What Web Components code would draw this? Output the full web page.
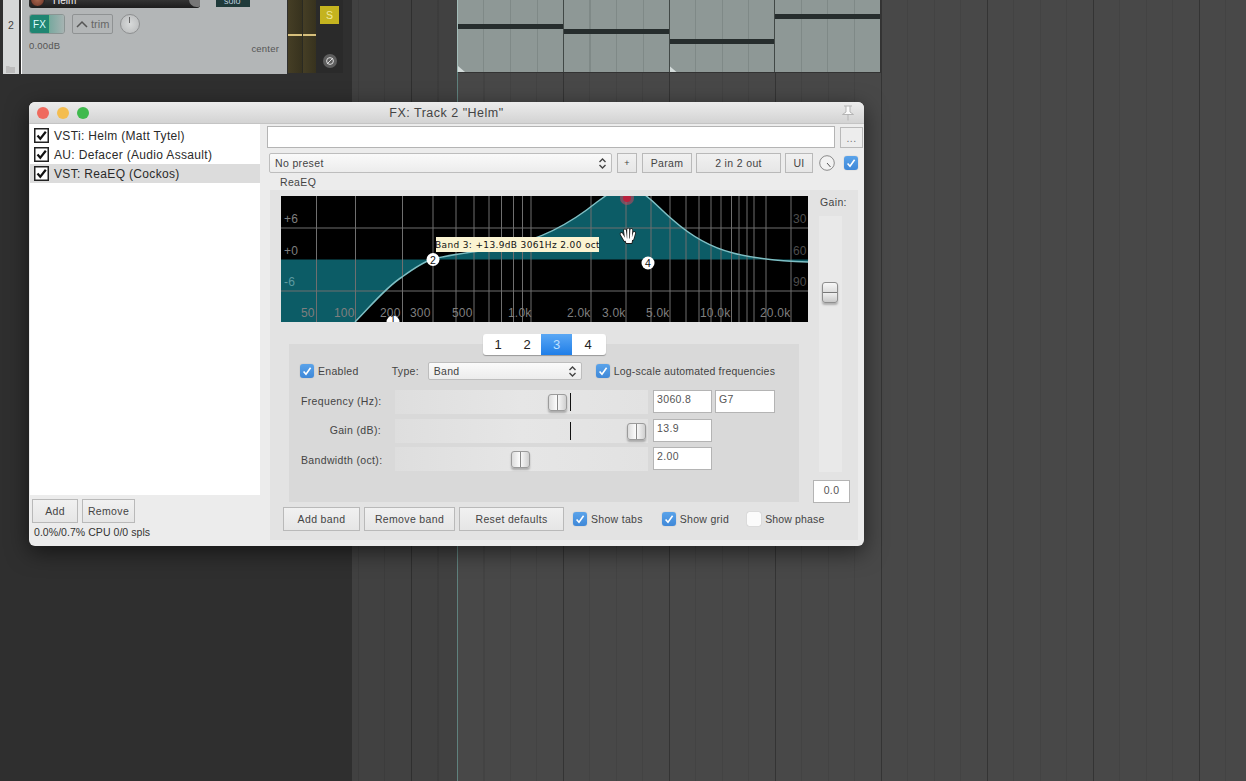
<!DOCTYPE html>
<html>
<head>
<meta charset="utf-8">
<title>FX: Track 2 "Helm"</title>
<style>
html, body { margin: 0; padding: 0; background: #333; }
body { width: 1246px; height: 781px; overflow: hidden; font-family: "Liberation Sans", Arial, sans-serif; }
</style>
</head>
<body>
<daw-desktop>
  <track-panel slot="tcp"></track-panel>
  <fx-window slot="window">
    <fx-list slot="list">
      <fx-row>VSTi: Helm (Matt Tytel)</fx-row>
      <fx-row>AU: Defacer (Audio Assault)</fx-row>
      <fx-row selected>VST: ReaEQ (Cockos)</fx-row>
    </fx-list>
    <rea-eq slot="plugin"></rea-eq>
  </fx-window>
</daw-desktop>

<script>
const shared = `
  * { box-sizing: border-box; }
`;

class Btn extends HTMLElement {
    constructor(){
        super();
        this.attachShadow({mode: 'open'});
    }
    connectedCallback(){
        this.shadowRoot.innerHTML = `
        <style>
        :host {
            display: inline-flex; align-items: center; justify-content: center;
            box-sizing: border-box; height: 24px;
            font: 10.5px "Liberation Sans", Arial, sans-serif; letter-spacing: .35px; color: #444;
            background: linear-gradient(#f1f1f1, #e6e6e6);
            border: 1px solid #b9b9b9; flex: none;
        }
        </style><slot></slot>`;
    }
}

class Check extends HTMLElement {
    constructor(){
        super();
        this.attachShadow({mode: 'open'});
    }
    connectedCallback(){
        const on = this.hasAttribute('on');
        this.shadowRoot.innerHTML = `
        <style>
        :host {
            display: inline-flex; align-items: center; gap: 4px; flex: none;
            font: 10.5px "Liberation Sans", Arial, sans-serif; letter-spacing: .3px; color: #444;
        }
        .box {
            width: 14px; height: 14px; border-radius: ${on ? 3 : 2}px; flex: none;
            background: ${on ? 'linear-gradient(#5aa3ea,#3f88d8)' : '#fbfbfb'};
            box-shadow: 0 0 1px #999; display: block;
        }
        </style>
        <svg class="box" viewBox="0 0 14 14">${on ? '<path d="M3.6 7.4 6 10.2 10.6 3.8" fill="none" stroke="#fff" stroke-width="1.6"/>' : ''}</svg>
        <slot></slot>`;
    }
}

class Combo extends HTMLElement {
    constructor(){
        super();
        this.attachShadow({mode: 'open'});
    }
    connectedCallback(){
        this.shadowRoot.innerHTML = `
        <style>
        :host {
            display: flex; align-items: center; justify-content: space-between; flex: none;
            box-sizing: border-box; padding: 0 4px 0 5px;
            font: 10.5px "Liberation Sans", Arial, sans-serif; letter-spacing: .35px; color: #444;
            background: linear-gradient(#fafafa, #ececec);
            border: 1px solid #bdbdbd; border-radius: 2px;
        }
        svg { display: block; flex: none; }
        </style>
        <slot></slot>
        <svg width="9" height="13" viewBox="0 0 9 13"><path d="M1.5 5 4.5 2 7.5 5M1.5 8 4.5 11 7.5 8" fill="none" stroke="#444" stroke-width="1.4"/></svg>`;
    }
}

class Field extends HTMLElement {
    constructor(){
        super();
        this.attachShadow({mode: 'open'});
    }
    connectedCallback(){
        this.shadowRoot.innerHTML = `
        <style>
        :host {
            display: flex; align-items: flex-start; flex: none;
            box-sizing: border-box; padding: 2px 0 0 3px;
            font: 10.5px "Liberation Sans", Arial, sans-serif; letter-spacing: .35px; color: #555;
            background: #fff; border: 1px solid #b4b4b4;
        }
        </style><slot></slot>`;
    }
}

class Slider extends HTMLElement {
    constructor(){
        super();
        this.attachShadow({mode: 'open'});
    }
    connectedCallback(){
        const pos = this.getAttribute('pos');
        const mark = this.getAttribute('mark');
        this.shadowRoot.innerHTML = `
        <style>
        :host {
            display: block; position: relative; height: 24px; width: 253px; flex: none;
            background: linear-gradient(90deg, #dedede, #e6e6e6 50%, #e2e2e2);
        }
        .thumb {
            position: absolute; top: 4px; left: ${pos}px; width: 19px; height: 17px; box-sizing: border-box;
            border: 1px solid #9b9b9b; border-radius: 3px;
            background: linear-gradient(90deg, #dcdcdc, #fbfbfb 45%, #888 48%, #888 52%, #f5f5f5 55%, #cfcfcf);
            box-shadow: 0 2px 2px rgba(0,0,0,.25);
        }
        .mark { position: absolute; top: 3px; left: ${mark}px; width: 1px; height: 18px; background: #111; }
        </style>
        ${mark ? '<div class="mark"></div>' : ''}
        <div class="thumb"></div>`;
    }
}

class TrackPanel extends HTMLElement {
    constructor(){
        super();
        this.attachShadow({mode: 'open'});
    }
    connectedCallback(){
        this.shadowRoot.innerHTML = `
        <style>
        :host { display: flex; height: 74px; width: 352px; background: #2f2f2f; padding-left: 3px; box-sizing: border-box; font: 10px "Liberation Sans", Arial, sans-serif; color: #444; }
        ${shared}
        .num { width: 16px; background: #d6d8d8; display: flex; flex-direction: column; align-items: center; color: #444; font-size: 10.5px; padding-top: 19px; position: relative; }
        .num svg { position: absolute; bottom: 1px; left: 3px; }
        .sep { width: 3px; background: #2f2f2f; border-right: 1px solid #fff; }
        .body { width: 265px; background: #b3b6b7; position: relative; display: grid; grid-template-rows: 8px 20px 1fr; row-gap: 6px; padding: 0 7px; }
        .top { display: flex; align-items: flex-start; height: 8px; gap: 0; }
        .black { width: 171px; height: 8px; background: linear-gradient(#333,#1c1c1c); border-radius: 0 0 3px 3px; color: #eee; font-size: 10px; position: relative; overflow: hidden; padding-left: 24px; line-height: 2px; }
        .rec { position: absolute; left: 1px; top: -8px; width: 15px; height: 15px; border-radius: 50%; background: radial-gradient(#a6664e, #6b3225); border: 1px solid #222; }
        .vol { position: absolute; left: 160px; top: -8px; width: 15px; height: 15px; border-radius: 50%; background: #777; }
        .meter { margin-left: 16px; width: 34px; height: 7px; background: #1f3a3a; color: #bcd; font-size: 9px; line-height: 2px; overflow: hidden; padding-left: 8px; }
        .ctl { display: flex; align-items: center; gap: 7px; }
        .fx { width: 36px; height: 20px; border-radius: 3px; border: 1px solid #8a9493; display: flex; overflow: hidden; font-size: 10px; color: #dff; }
        .fx b { font-weight: normal; width: 19px; background: #1f8672; display: flex; align-items: center; justify-content: center; }
        .fx i { flex: 1; background: linear-gradient(90deg,#7aa9a0,#a6b3b2); border-left: 1px solid #6b8; }
        .trim { width: 41px; height: 20px; border: 1px solid #8f9293; border-radius: 2px; display: flex; align-items: center; gap: 2px; padding-left: 3px; font-size: 11px; color: #666; }
        .knob { width: 20px; height: 20px; border-radius: 50%; background: radial-gradient(#d8dada, #b6b8b9); border: 1px solid #8e9091; position: relative; }
        .knob::after { content: ""; position: absolute; left: 8px; top: 2px; width: 1px; height: 6px; background: #666; }
        .low { display: flex; justify-content: space-between; padding-right: 1px; font-size: 9.5px; color: #555; letter-spacing: .2px; }
        .low span:last-child { padding-top: 3px; }
        .fader { width: 28px; margin-left: 1px; display: grid; grid-template-columns: 1fr 1fr; gap: 1px; background: #2a2a22; height: 73px; }
        .fader div { background: linear-gradient(90deg, #453e25, #37321e); position: relative; }
        .fader div::after { content: ""; position: absolute; left: 0; right: 0; top: 34px; height: 2px; background: #d6bf7c; }
        .strip { width: 27px; height: 73px; background: #2a2a2a; display: flex; flex-direction: column; align-items: center; padding-top: 6px; justify-content: space-between; padding-bottom: 5px; }
        .solo { width: 19px; height: 18px; background: #c4b31f; color: #efe9a0; font-size: 10.5px; display: flex; align-items: center; justify-content: center; }
        .phase { width: 14px; height: 14px; border-radius: 50%; background: #5e5e5e; display: block; }
        </style>
        <div class="num">2
          <svg width="9" height="7" viewBox="0 0 9 7"><path d="M0 0h3l1 1h5v6H0z" fill="#bcbcbc"/></svg>
        </div>
        <div class="sep"></div>
        <div class="body">
          <div class="top">
            <div class="black">Helm<span class="rec"></span><span class="vol"></span></div>
            <div class="meter">solo</div>
          </div>
          <div class="ctl">
            <div class="fx"><b>FX</b><i></i></div>
            <div class="trim"><svg width="13" height="8" viewBox="0 0 13 8"><path d="M1 7 6 2l5 5" fill="none" stroke="#555" stroke-width="1.5"/></svg>trim</div>
            <div class="knob"></div>
          </div>
          <div class="low"><span>0.00dB</span><span>center</span></div>
        </div>
        <div class="fader"><div></div><div></div></div>
        <div class="strip">
          <div class="solo">S</div>
          <svg class="phase" viewBox="0 0 14 14"><circle cx="7" cy="7" r="3.4" fill="none" stroke="#ddd"/><path d="M4 10 10 4" stroke="#ddd"/></svg>
        </div>`;
    }
}

class DawDesktop extends HTMLElement {
    constructor(){
        super();
        this.attachShadow({mode: 'open'});
    }
    connectedCallback(){
        const notes = [[24,1],[29,0],[39,1],[14,0]];
        const items = notes.map(n => `<div class="item ${n[1] ? 'fade' : ''}"><span style="margin-top:${n[0]}px"></span></div>`).join('');
        this.shadowRoot.innerHTML = `
        <style>
        :host { display: block; position: relative; width: 1246px; height: 781px; overflow: hidden; background: #2f2f2f; }
        .layout { display: grid; grid-template-columns: 352px 1fr; height: 100%; }
        .left { background: #2f2f2f; }
        .arrange {
            position: relative; background-color: #484848;
            background-image:
              linear-gradient(90deg, rgba(0,0,0,.1) 105px, transparent 105px),
              repeating-linear-gradient(90deg, #343434 0 1px, transparent 1px 106px),
              repeating-linear-gradient(90deg, #434343 0 1px, transparent 1px 26.5px);
            background-position: 0 0, 105px 0, 105px 0;
        }
        .lane { display: flex; margin-left: 105px; width: 424px; height: 72px; border-bottom: 1px solid #333; box-sizing: content-box; }
        .item {
            flex: 1; height: 72px; background-color: #8e9896; box-sizing: border-box; position: relative;
            border-left: 1px solid #414846;
            background-image: repeating-linear-gradient(90deg, transparent 0 25.5px, #7f8987 25.5px 26.5px);
        }
        .item:first-child { border-left: 1px solid #a3bcb9; }
        .item:last-child { border-right: 1px solid #333; }
        .item span { display: block; height: 5px; background: #262d2d; position: relative; }
        .item.fade::after { content: ""; position: absolute; left: 0; bottom: 0; width: 7px; height: 6px; background: #d4dcdb; clip-path: polygon(0 0, 100% 100%, 0 100%); }
        .cursor { position: absolute; left: 105px; top: 72px; bottom: 0; width: 1px; background: #5f827e; }
        .win { position: absolute; left: 29px; top: 102px; }
        </style>
        <div class="layout">
          <div class="left"><slot name="tcp"></slot></div>
          <div class="arrange"><div class="lane">${items}</div><div class="cursor"></div></div>
        </div>
        <div class="win"><slot name="window"></slot></div>`;
    }
}

class FxWindow extends HTMLElement {
    constructor(){
        super();
        this.attachShadow({mode: 'open'});
    }
    connectedCallback(){
        this.shadowRoot.innerHTML = `
        <style>
        :host {
            display: flex; flex-direction: column; width: 835px; height: 444px;
            background: #ececec; border-radius: 6px; overflow: hidden;
            font: 10.5px "Liberation Sans", Arial, sans-serif; color: #333;
            box-shadow: 0 6px 22px rgba(0,0,0,.55);
        }
        ${shared}
        .title {
            height: 22px; flex: none; display: flex; align-items: center; position: relative;
            background: linear-gradient(#ececec, #d3d3d3); justify-content: center;
            font-size: 12.5px; letter-spacing: .5px; color: #444; border-bottom: 1px solid #c4c4c4;
        }
        .lights { position: absolute; left: 8px; top: 5px; display: flex; gap: 8px; }
        .lights i { width: 12px; height: 12px; border-radius: 50%; display: block; }
        .pin { position: absolute; right: 9px; top: 3px; }
        .main { flex: 1; display: grid; grid-template-columns: 231px 1fr; min-height: 0; }
        .side { display: flex; flex-direction: column; padding-left: 1px; }
        .btns { display: flex; gap: 4px; padding: 4px 0 0 2px; }
        .btns fx-btn { width: 46px; }
        .btns fx-btn + fx-btn { width: 53px; }
        .cpu { padding: 3px 0 0 4px; font-size: 10.5px; letter-spacing: .05px; color: #333; }
        </style>
        <div class="title">
          <div class="lights"><i style="background:#ef6a5e"></i><i style="background:#f4bd4f"></i><i style="background:#3fb94d"></i></div>
          FX: Track 2 "Helm"
          <svg class="pin" width="14" height="16" viewBox="0 0 14 16"><path d="M3 1h8M5 1v6L1.500 9.500h11L9 7V1M7 9.500V15.500" fill="#fafafa" stroke="#b5b5b5"/></svg>
        </div>
        <div class="main">
          <div class="side">
            <slot name="list"></slot>
            <div class="btns"><fx-btn>Add</fx-btn><fx-btn>Remove</fx-btn></div>
            <div class="cpu">0.0%/0.7% CPU 0/0 spls</div>
          </div>
          <slot name="plugin"></slot>
        </div>`;
    }
}

class FxList extends HTMLElement {
    constructor(){
        super();
        this.attachShadow({mode: 'open'});
    }
    connectedCallback(){
        this.shadowRoot.innerHTML = `
        <style>
        :host { display: flex; flex-direction: column; height: 371px; width: 230px; background: #fff; padding-top: 2px; box-sizing: border-box; flex: none; }
        </style><slot></slot>`;
    }
}

class FxRow extends HTMLElement {
    constructor(){
        super();
        this.attachShadow({mode: 'open'});
    }
    connectedCallback(){
        this.shadowRoot.innerHTML = `
        <style>
        :host {
            display: flex; align-items: center; gap: 5px; height: 19px; padding-left: 4px;
            font: 12px "Liberation Sans", Arial, sans-serif; letter-spacing: .33px; color: #2a2a2a;
            background: ${this.hasAttribute('selected') ? '#dcdcdc' : '#fff'};
        }
        svg { display: block; flex: none; }
        </style>
        <svg width="15" height="15" viewBox="0 0 15 15"><rect x=".75" y=".75" width="13.500" height="13.500" fill="#fff" stroke="#222" stroke-width="1.500"/><path d="M3.500 7.500 6.300 10.800 11.800 3.800" fill="none" stroke="#111" stroke-width="2.200"/></svg>
        <slot></slot>`;
    }
}

class EqGraph extends HTMLElement {
    constructor(){
        super();
        this.attachShadow({mode: 'open'});
    }
    connectedCallback(){
        // x positions of the grid, in window coordinates of the reference
        const xs = [316.5,355.5,402.5,433,456,474,489,501.5,513.5,522.5,531,591,626,651,670,686,699,711,721,731.5,739,747,754,766,791];
        const ox = 281;
        const grid = xs.map(x => `<line x1="${x-ox}" x2="${x-ox}" y1="0" y2="126"/>`).join('');
        const freq = [[50,301],[100,334],[200,380],[300,410],[500,452],['1.0k',508],['2.0k',567],['3.0k',602],['5.0k',646],['10.0k',700],['20.0k',760]];
        const fl = freq.map(f => `<text x="${f[1]-ox}" y="121">${f[0]}</text>`).join('');
        const curve = 'M74 126C90 110 104 92 121 81 132 73 142 66 152 63 176 57 200 56 226 50 262 43 290 27 316 6L330 -4 360 -4C372 4 380 14 392 24 410 40 432 52 452 57 474 63 500 65 527 66';
        this.shadowRoot.innerHTML = `
        <style>
        :host { display: block; width: 527px; height: 126px; position: relative; flex: none; background: #000; overflow: hidden; }
        svg { display: block; position: absolute; left: 0; top: 0; }
        .grid line { stroke: #6f6f6f; stroke-width: 1; }
        text { font: 12px "Liberation Sans", Arial, sans-serif; fill: #7f7f7f; letter-spacing: .2px; }
        text.pt { font: 10.5px "Liberation Sans", Arial, sans-serif; fill: #111; text-anchor: middle; letter-spacing: 0; }
        .tip {
            position: absolute; left: 155px; top: 41px; width: 163px; height: 15px; background: #fbf4d2;
            font: 9px "DejaVu Sans", sans-serif; color: #111; display: flex; align-items: center; justify-content: center;
            white-space: nowrap;
        }
        </style>
        <svg width="527" height="126" viewBox="0 0 527 126">
          <path d="M0 63.500V126H74C90 110 104 92 121 81 132 73 142 66 152 63.500Z" fill="#0c5c66"/>
          <path d="M152 63.500C176 57 200 56 226 50 262 43 290 27 316 6L330 -4 360 -4C372 4 380 14 392 24 410 40 432 52 452 57 466 61 478 63 486 63.500Z" fill="#0c5c66"/>
          <path d="M486 63.500C500 65 514 65.500 527 66V63.500Z" fill="#0c5c66"/>
          <g class="grid">${grid}
            <line x1="0" x2="527" y1="32" y2="32"/><line x1="0" x2="527" y1="95" y2="95"/>
          </g>
          <path d="${curve}" fill="none" stroke="#7fbfc4" stroke-width="1.500"/>
          <text x="3" y="27">+6</text><text x="3" y="59">+0</text>
          <text x="3" y="90" style="fill:#5d9aa0">-6</text>
          <text x="512" y="27" style="fill:#4d4d4d">30</text><text x="512" y="59" style="fill:#4d4d4d">60</text><text x="512" y="90" style="fill:#4d4d4d">90</text>
          ${fl}
          <circle cx="112" cy="126" r="6.500" fill="#fff"/><text class="pt" x="112" y="127">1</text>
          <circle cx="152" cy="63.500" r="6.500" fill="#fff"/><text class="pt" x="152" y="67.500">2</text>
          <circle cx="346" cy="2" r="7" fill="#c9485f" opacity=".55"/><circle cx="346" cy="2" r="4" fill="#b8203c"/>
          <circle cx="367" cy="67" r="6.500" fill="#fff"/><text class="pt" x="367" y="71">4</text>
          <g fill="none" stroke="#1c1c1c" stroke-width="3.600" stroke-linecap="round">
            <path d="M340.500 38 344 44M344 34.500 345 42M347.200 33.500V42M350.300 34 349.800 42M353.200 37 351.500 43"/>
          </g>
          <path d="M343 42h9l-1 5.500h-6z" fill="#fff" stroke="#1c1c1c" stroke-width="1"/>
          <g fill="none" stroke="#fff" stroke-width="2" stroke-linecap="round">
            <path d="M340.500 38 344 44M344 34.500 345 43M347.200 33.500V43M350.300 34 349.800 43M353.200 37 351.500 43"/>
          </g>
        </svg>
        <div class="tip">Band 3: +13.9dB 3061Hz 2.00 oct</div>`;
    }
}

class ReaEq extends HTMLElement {
    constructor(){
        super();
        this.attachShadow({mode: 'open'});
    }
    connectedCallback(){
        this.shadowRoot.innerHTML = `
        <style>
        :host { display: flex; flex-direction: column; font: 10.5px "Liberation Sans", Arial, sans-serif; letter-spacing: .35px; color: #444; padding: 2px 0 0 7px; min-width: 0; box-sizing: border-box; }
        ${shared}
        .name { display: flex; gap: 5px; height: 22px; flex: none; align-items: flex-start; }
        .path { width: 568px; height: 22px; margin-right: 0; }
        .more { width: 23px; height: 21px; margin-top: 1px; color: #777; background: #ededed; }
        .preset { display: flex; align-items: center; height: 20px; margin: 5px 0 0 2px; flex: none; }
        .preset fx-combo { width: 343px; height: 20px; }
        .preset fx-btn { height: 20px; }
        .knobsm { width: 16px; height: 16px; margin-left: 6px; flex: none; display: block; }
        .cap { margin-left: 13px; height: 17px; line-height: 17px; flex: none; font-size: 10.5px; padding-top: 1px; }
        .plug { margin-left: 3px; width: 588px; height: 350px; flex: none; background: #e3e3e3; display: grid; grid-template-columns: 1fr 56px; }
        .lhs { padding: 6px 0 0 11px; display: flex; flex-direction: column; position: relative; min-width: 0; }
        .rhs { display: flex; flex-direction: column; padding: 6px 0 0 0; }
        .rhs .glabel { margin-left: 18px; height: 12px; line-height: 12px; }
        .gtrack { width: 23px; height: 256px; margin: 8px 0 0 17px; background: #e9e9e9; position: relative; flex: none; }
        .gthumb { position: absolute; left: 3px; top: 66px; width: 16px; height: 21px; border: 1px solid #8e8e8e; border-radius: 3px; background: linear-gradient(#f8f8f8, #ddd 48%, #777 49%, #777 53%, #eee 54%, #c9c9c9); box-shadow: 0 2px 2px rgba(0,0,0,.25); }
        .gval { width: 37px; height: 23px; margin: 8px 0 0 11px; justify-content: center; padding-left: 0; padding-top: 3px; }
        .band { position: relative; margin: 22px 0 0 8px; width: 510px; height: 158px; background: #d9d9d9; flex: none; padding: 18px 0 0 11px; }
        .tabs { position: absolute; left: 194px; top: -10px; width: 123px; height: 21px; display: grid; grid-template-columns: 30px 28px 31px 34px; background: #fff; border-radius: 3px; box-shadow: 0 1px 1px rgba(0,0,0,.3); overflow: hidden; font-size: 13px; color: #222; letter-spacing: 0; }
        .tabs span { display: flex; align-items: center; justify-content: center; }
        .tabs span:last-child { padding-right: 2px; }
        .tabs .on { background: linear-gradient(#5aa7f4,#1f7ee8); color: #bfe0ff; }
        .r1 { display: flex; align-items: center; height: 18px; }
        .r1 .ty { margin-left: 33px; width: 36px; }
        .r1 fx-combo { width: 154px; height: 18px; }
        .r1 fx-check:last-child { margin-left: 14px; letter-spacing: .2px; }
        .rows { display: grid; grid-template-columns: 94px 253px 64px 63px; grid-template-rows: 25px 24px 24px; row-gap: 4px; margin-top: 10px; align-items: start; margin-left: 1px; }
        .rows label { white-space: nowrap; line-height: 22px; }
        .rows label.rt { text-align: right; padding-right: 14px; }
        .rows label.lo { line-height: 26px; }
        .rows fx-field { height: 23px; width: 59px; margin-left: 5px; }
        .rows fx-field.g7 { width: 60px; margin-left: 3px; }
        .foot { display: flex; align-items: center; margin: 5px 0 0 2px; }
        .foot fx-btn { margin-right: 4px; }
        </style>
        <div class="name">
          <fx-field class="path"></fx-field>
          <fx-btn class="more">...</fx-btn>
        </div>
        <div class="preset">
          <fx-combo>No preset</fx-combo>
          <fx-btn style="width:20px;margin-left:5px;font-size:9px">+</fx-btn>
          <fx-btn style="width:50px;margin-left:5px">Param</fx-btn>
          <fx-btn style="width:85px;margin-left:4px">2 in 2 out</fx-btn>
          <fx-btn style="width:28px;margin-left:4px">UI</fx-btn>
          <svg class="knobsm" viewBox="0 0 16 16"><circle cx="8" cy="8" r="7.300" fill="#f2f2f2" stroke="#8a8a8a"/><path d="M8 8 11.500 12" stroke="#555"/></svg>
          <fx-check on style="margin-left:9px"></fx-check>
        </div>
        <div class="cap">ReaEQ</div>
        <div class="plug">
          <div class="lhs">
            <eq-graph></eq-graph>
            <div class="band">
              <div class="tabs"><span>1</span><span>2</span><span class="on">3</span><span>4</span></div>
              <div class="r1">
                <fx-check on>Enabled</fx-check>
                <span class="ty">Type:</span>
                <fx-combo>Band</fx-combo>
                <fx-check on>Log-scale automated frequencies</fx-check>
              </div>
              <div class="rows">
                <label>Frequency (Hz):</label><fx-slider pos="153" mark="175"></fx-slider><fx-field>3060.8</fx-field><fx-field class="g7">G7</fx-field>
                <label class="rt">Gain (dB):</label><fx-slider pos="232" mark="175"></fx-slider><fx-field>13.9</fx-field><span></span>
                <label class="lo">Bandwidth (oct):</label><fx-slider pos="116"></fx-slider><fx-field>2.00</fx-field><span></span>
              </div>
            </div>
            <div class="foot">
              <fx-btn style="width:77px">Add band</fx-btn>
              <fx-btn style="width:91px">Remove band</fx-btn>
              <fx-btn style="width:105px">Reset defaults</fx-btn>
              <fx-check on style="margin-left:5px">Show tabs</fx-check>
              <fx-check on style="margin-left:19px">Show grid</fx-check>
              <fx-check style="margin-left:18px;letter-spacing:.15px">Show phase</fx-check>
            </div>
          </div>
          <div class="rhs">
            <div class="glabel">Gain:</div>
            <div class="gtrack"><div class="gthumb"></div></div>
            <fx-field class="gval">0.0</fx-field>
          </div>
        </div>`;
    }
}

customElements.define('fx-btn', Btn)
customElements.define('fx-check', Check)
customElements.define('fx-combo', Combo)
customElements.define('fx-field', Field)
customElements.define('fx-slider', Slider)
customElements.define('track-panel', TrackPanel)
customElements.define('daw-desktop', DawDesktop)
customElements.define('fx-window', FxWindow)
customElements.define('fx-list', FxList)
customElements.define('fx-row', FxRow)
customElements.define('eq-graph', EqGraph)
customElements.define('rea-eq', ReaEq)
</script>
</body>
</html>
